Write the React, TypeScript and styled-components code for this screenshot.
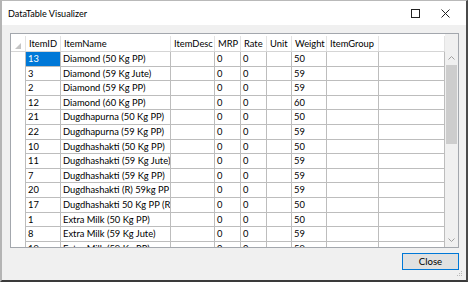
import styled, { createGlobalStyle } from "styled-components"

const GlobalStyle = createGlobalStyle`
    html, body {
        margin: 0;
        padding: 0;
        background: #ffffff;
    }
    body {
        font-family: Lato, "Noto Sans", sans-serif;
        font-size: 9.35px;
        color: #000000;
    }
`

const Window = styled.div`
    width: 468px;
    height: 282px;
    box-sizing: border-box;
    display: flex;
    flex-direction: column;
    border-top: 1px solid #b9b9b9;
    border-left: 2px solid #b4b4b4;
    border-right: 2px solid #4a4a4a;
    border-bottom: 2px solid #3a3a3a;
    background: #f0f0f0;
`

const TitleBar = styled.div`
    height: 24px;
    flex: none;
    display: flex;
    align-items: center;
    background: #ffffff;
    padding: 0 16px 0 6px;
`

const Title = styled.span`
    flex: 1;
    font-size: 9.1px;
`

const Controls = styled.div`
    display: flex;
    align-items: center;
    gap: 21px;
    svg {
        display: block;
    }
`

const Body = styled.div`
    flex: 1;
    display: flex;
    flex-direction: column;
    align-items: flex-end;
    gap: 5px;
    padding: 8px 7px 0 9px;
    position: relative;
`

const Grid = styled.div`
    width: 449px;
    height: 215px;
    box-sizing: border-box;
    border: 1px solid #a3a7ad;
    background: #ffffff;
    display: flex;
    overflow: hidden;
`

const TableArea = styled.div`
    flex: 1;
    display: flex;
    flex-direction: column;
    overflow: hidden;
`

const HeaderRow = styled.div`
    height: 18px;
    flex: none;
    display: flex;
    box-sizing: border-box;
    border-bottom: 1px solid #d5d5d5;
`

const HeaderCell = styled.div<{ $w?: number }>`
    ${(p) => (p.$w ? `width: ${p.$w}px; flex: none;` : "flex: 1;")}
    box-sizing: border-box;
    border-right: 1px solid #e3e3e3;
    padding: 0 1px 0 3px;
    display: flex;
    align-items: center;
    white-space: nowrap;
    overflow: hidden;
    margin: 2px 0 0;
`

const Corner = styled.div`
    width: 15px;
    flex: none;
    box-sizing: border-box;
    border-right: 1px solid #e3e3e3;
    display: flex;
    align-items: flex-end;
    justify-content: flex-end;
    padding: 0 4px 2px 0;
    margin: 2px 0 0;
`

const Row = styled.div`
    height: 14.6px;
    flex: none;
    display: flex;
`

const RowHead = styled.div`
    width: 15px;
    flex: none;
    box-sizing: border-box;
    border-right: 1px solid #bdbdbd;
`

const Cell = styled.div<{ $w?: number; $selected?: boolean }>`
    ${(p) => (p.$w ? `width: ${p.$w}px; flex: none;` : "flex: 1;")}
    box-sizing: border-box;
    border-right: 1px solid #bdbdbd;
    border-bottom: 1px solid #bdbdbd;
    padding: 0 1px 0 2px;
    line-height: 13.6px;
    white-space: nowrap;
    overflow: hidden;
    background: ${(p) => (p.$selected ? "#0078d7" : "#ffffff")};
    color: ${(p) => (p.$selected ? "#ffffff" : "#000000")};
`

const ScrollBar = styled.div`
    width: 13px;
    flex: none;
    display: flex;
    flex-direction: column;
    background: #f0f0f0;
`

const ScrollArrow = styled.div<{ $h: number }>`
    height: ${(p) => p.$h}px;
    flex: none;
    display: flex;
    align-items: center;
    justify-content: center;
`

const Thumb = styled.div`
    height: 79px;
    flex: none;
    margin: 0 1px;
    background: #cdcdcd;
`

const Track = styled.div`
    flex: 1;
`

const CloseButton = styled.button`
    width: 57px;
    height: 17px;
    box-sizing: border-box;
    border: 1px solid #0078d7;
    background: #e1e1e1;
    font-family: inherit;
    font-size: 9.6px;
    padding: 0;
    color: #000000;
`

const Grip = styled.svg`
    position: absolute;
    right: 3px;
    bottom: 3px;
`

const columns = [
    { name: "ItemID", w: 35 },
    { name: "ItemName", w: 110 },
    { name: "ItemDesc", w: 44 },
    { name: "MRP", w: 26 },
    { name: "Rate", w: 26 },
    { name: "Unit", w: 25 },
    { name: "Weight", w: 35 },
    { name: "ItemGroup", w: 52 },
]

const rows: [string, string, string][] = [
    ["13", "Diamond (50 Kg PP)", "50"],
    ["3", "Diamond (59 Kg Jute)", "59"],
    ["2", "Diamond (59 Kg PP)", "59"],
    ["12", "Diamond (60 Kg PP)", "60"],
    ["21", "Dugdhapurna (50 Kg PP)", "50"],
    ["22", "Dugdhapurna (59 Kg PP)", "59"],
    ["10", "Dugdhashakti (50 Kg PP)", "50"],
    ["11", "Dugdhashakti (59 Kg Jute)", "59"],
    ["7", "Dugdhashakti (59 Kg PP)", "59"],
    ["20", "Dugdhashakti (R) 59kg PP", "59"],
    ["17", "Dugdhashakti 50 Kg PP (R)", "50"],
    ["1", "Extra Milk (50 Kg PP)", "50"],
    ["8", "Extra Milk (59 Kg Jute)", "59"],
    ["19", "Extra Milk (59 Kg PP)", "59"],
]

function App() {
    return (
        <>
            <GlobalStyle />
            <Window>
                <TitleBar>
                    <Title>DataTable Visualizer</Title>
                    <Controls>
                        <svg width="9" height="9" viewBox="0 0 9 9">
                            <rect x="0.5" y="0.5" width="8" height="8" fill="none" stroke="#222" strokeWidth="1" />
                        </svg>
                        <svg width="9" height="9" viewBox="0 0 9 9">
                            <path d="M0.5 0.5 L8.5 8.5 M8.5 0.5 L0.5 8.5" stroke="#222" strokeWidth="1" />
                        </svg>
                    </Controls>
                </TitleBar>
                <Body>
                    <Grid>
                        <TableArea>
                            <HeaderRow>
                                <Corner>
                                    <svg width="6" height="6" viewBox="0 0 6 6">
                                        <path d="M6 0 L6 6 L0 6 Z" fill="#c4c4c4" />
                                    </svg>
                                </Corner>
                                {columns.map((c) => (
                                    <HeaderCell key={c.name} $w={c.w}>{c.name}</HeaderCell>
                                ))}
                                <HeaderCell />
                            </HeaderRow>
                            {rows.map((r, i) => (
                                <Row key={r[0]}>
                                    <RowHead />
                                    <Cell $w={35} $selected={i === 0}>{r[0]}</Cell>
                                    <Cell $w={110}>{r[1]}</Cell>
                                    <Cell $w={44} />
                                    <Cell $w={26}>0</Cell>
                                    <Cell $w={26}>0</Cell>
                                    <Cell $w={25} />
                                    <Cell $w={35}>{r[2]}</Cell>
                                    <Cell $w={52} />
                                    <Cell />
                                </Row>
                            ))}
                        </TableArea>
                        <ScrollBar>
                            <ScrollArrow $h={17} />
                            <ScrollArrow $h={14}>
                                <svg width="7" height="4" viewBox="0 0 7 4">
                                    <path d="M0.5 3.5 L3.5 0.5 L6.5 3.5" fill="none" stroke="#a0a0a0" strokeWidth="1" />
                                </svg>
                            </ScrollArrow>
                            <Thumb />
                            <Track />
                            <ScrollArrow $h={14}>
                                <svg width="7" height="4" viewBox="0 0 7 4">
                                    <path d="M0.5 0.5 L3.5 3.5 L6.5 0.5" fill="none" stroke="#a0a0a0" strokeWidth="1" />
                                </svg>
                            </ScrollArrow>
                        </ScrollBar>
                    </Grid>
                    <CloseButton>Close</CloseButton>
                    <Grip width="6" height="6" viewBox="0 0 6 6">
                        <rect x="4" y="0" width="1" height="1" fill="#b8b8b8" />
                        <rect x="2" y="2" width="1" height="1" fill="#b8b8b8" />
                        <rect x="4" y="2" width="1" height="1" fill="#b8b8b8" />
                        <rect x="0" y="4" width="1" height="1" fill="#b8b8b8" />
                        <rect x="2" y="4" width="1" height="1" fill="#b8b8b8" />
                        <rect x="4" y="4" width="1" height="1" fill="#b8b8b8" />
                    </Grip>
                </Body>
            </Window>
        </>
    )
}

export default App
